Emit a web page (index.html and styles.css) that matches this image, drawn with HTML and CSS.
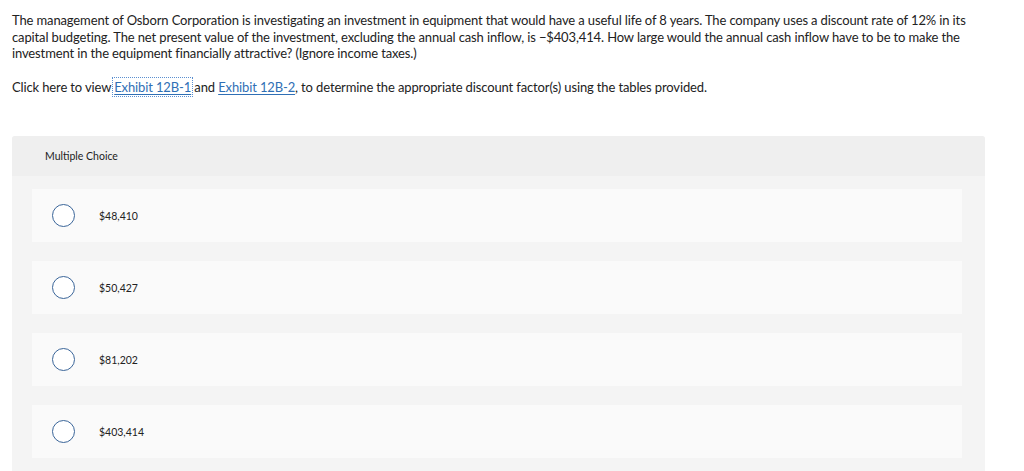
FILE: index.html
```html
<!DOCTYPE html>
<html>
<head>
<meta charset="utf-8">
<link rel="stylesheet" href="styles.css">
</head>
<body>
<div class="question">
  <p class="prompt">The management of Osborn Corporation is investigating an investment in equipment that would have a useful life of 8 years. The company uses a discount rate of 12% in its capital budgeting. The net present value of the investment, excluding the annual cash inflow, is −$403,414. How large would the annual cash inflow have to be to make the investment in the equipment financially attractive? (Ignore income taxes.)</p>
  <p class="prompt">Click here to view <a class="link focused" href="#">Exhibit 12B-1</a> and <a class="link" href="#">Exhibit 12B-2</a>, to determine the appropriate discount factor(s) using the tables provided.</p>
</div>
<div class="mc">
  <div class="mc-head">Multiple Choice</div>
  <div class="mc-body">
    <div class="option"><span class="radio"></span><span class="label">$48,410</span></div>
    <div class="option"><span class="radio"></span><span class="label">$50,427</span></div>
    <div class="option"><span class="radio"></span><span class="label">$81,202</span></div>
    <div class="option"><span class="radio"></span><span class="label">$403,414</span></div>
  </div>
</div>
</body>
</html>
```
FILE: styles.css
```css
html, body {
  margin: 0;
  padding: 0;
  background: #ffffff;
}
body {
  font-family: "Lato", "Open Sans", sans-serif;
  color: #222;
}
.question {
  padding: 12px 12px 0 12px;
}
.prompt {
  margin: 0 0 17px 0;
  font-size: 13px;
  line-height: 16.5px;
  max-width: 980px;
  letter-spacing: -0.13px;
}
.link {
  color: #2f6fb5;
  text-decoration: underline;
  text-underline-offset: 2px;
}
.focused {
  outline: 1px dotted #5b8fd0;
  outline-offset: 1px;
}
.mc {
  margin: 41px 0 0 12px;
  width: 973px;
  background: #f4f4f4;
  border-radius: 3px 3px 0 0;
  overflow: hidden;
}
.mc-head {
  height: 40px;
  background: #efefef;
  display: flex;
  align-items: center;
  padding-left: 33px;
  font-size: 10.5px;
  color: #222;
}
.mc-body {
  padding: 13px 23px 20px 20px;
  display: flex;
  flex-direction: column;
  gap: 19px;
}
.option {
  height: 53px;
  background: #fafafa;
  display: flex;
  align-items: center;
  padding-left: 20px;
}
.radio {
  width: 21px;
  height: 21px;
  border: 1.3px solid #3a6599;
  border-radius: 50%;
  background: #fff;
  flex: none;
}
.label {
  margin-left: 24px;
  font-size: 10.5px;
  color: #222;
}
```
